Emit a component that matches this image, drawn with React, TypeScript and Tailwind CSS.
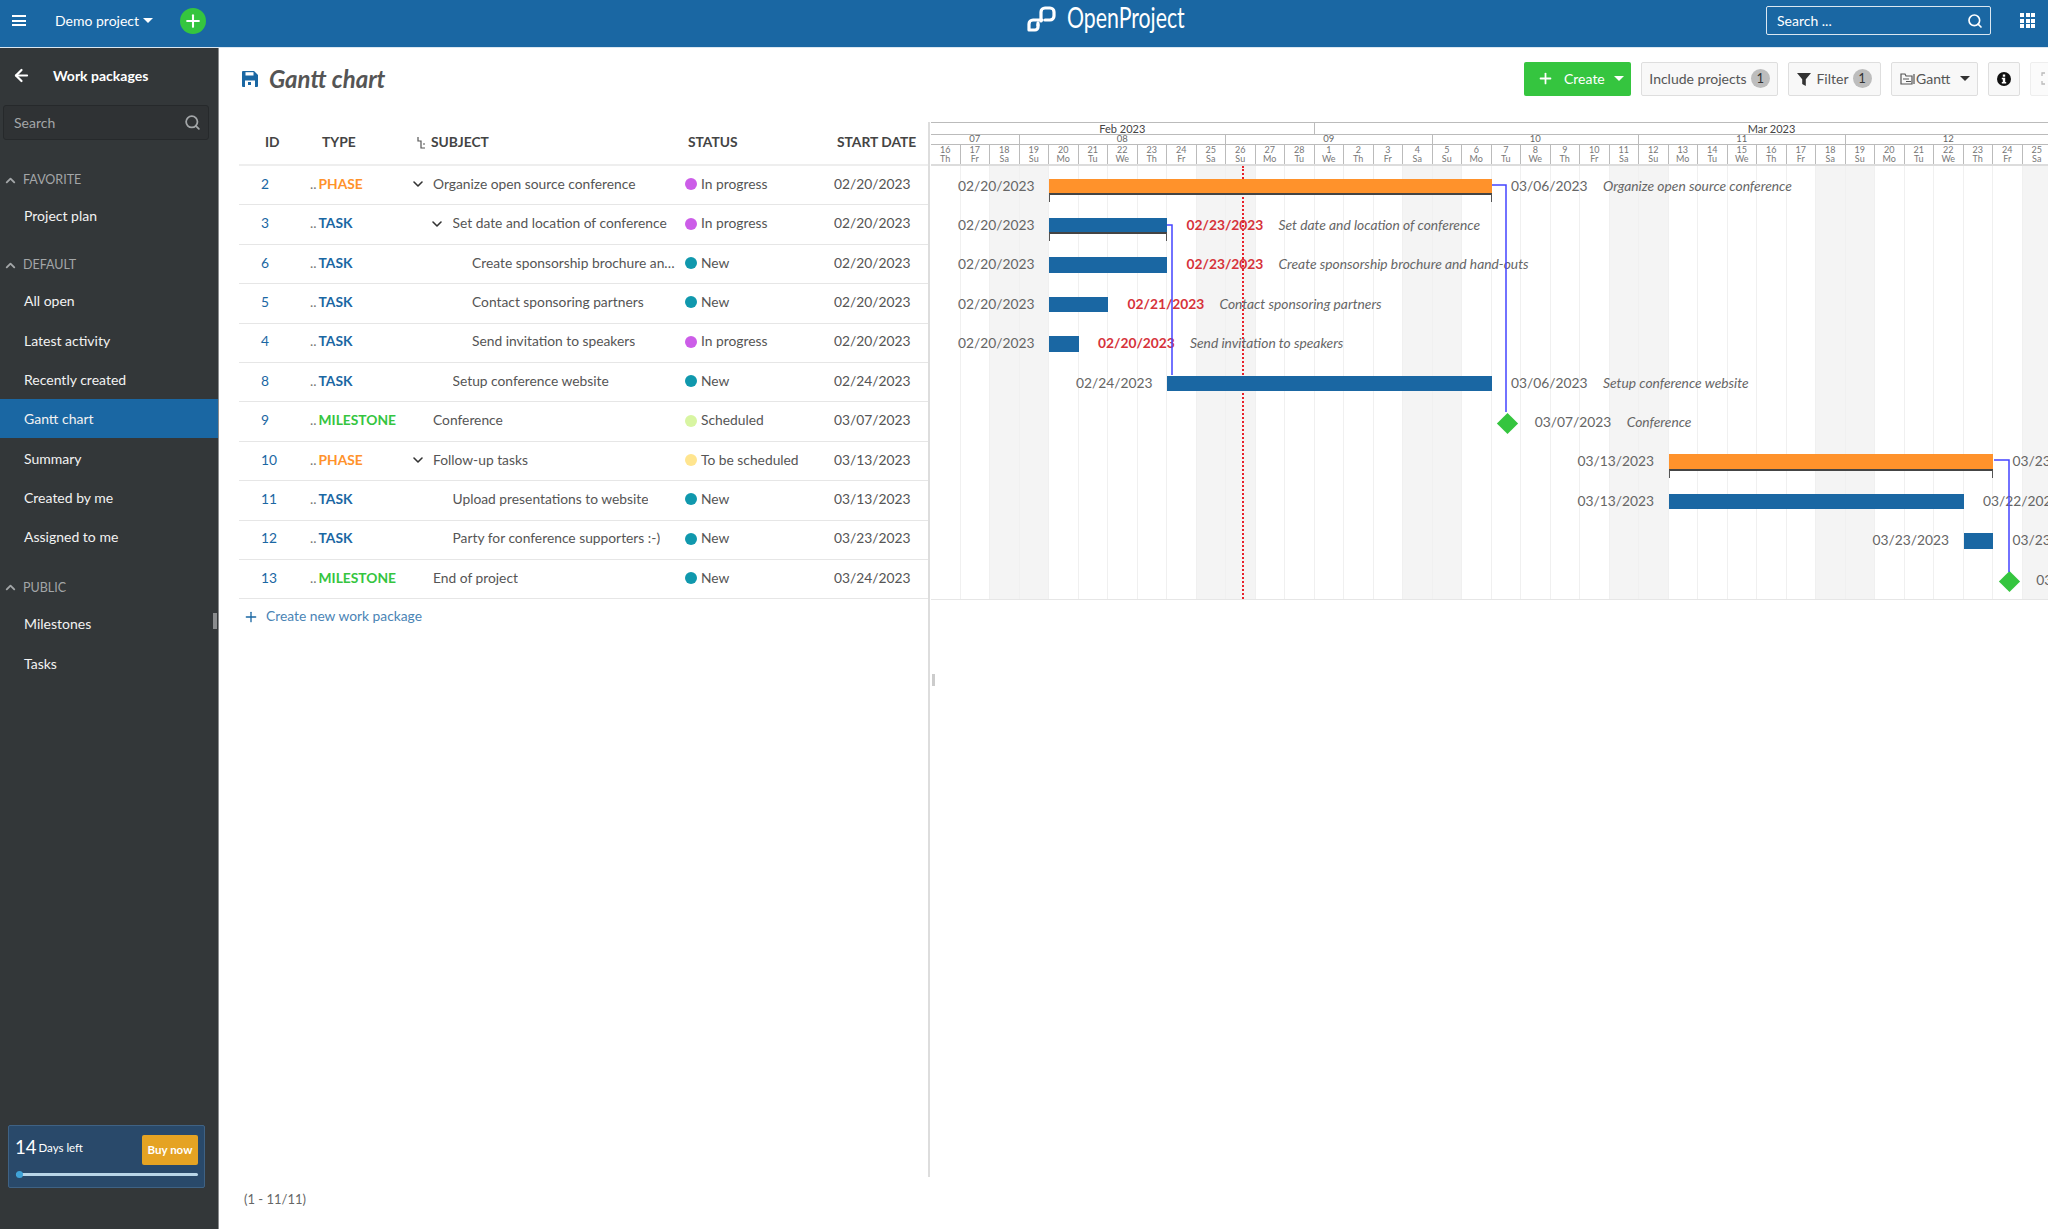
import { ArrowLeft, ChevronDown, ChevronUp, Plus, Search } from "lucide-react";

const DAY = 29.5;
const ROW = 39.4;
const DAY_NAMES = ["Th", "Fr", "Sa", "Su", "Mo", "Tu", "We"];

const days = Array.from({ length: 38 }, (_, i) => ({
  num: i < 13 ? 16 + i : i - 12,
  name: DAY_NAMES[i % 7],
  weekend: i % 7 === 2 || i % 7 === 3,
}));

const weeks = [
  { label: "07", span: 3 },
  { label: "08", span: 7 },
  { label: "09", span: 7 },
  { label: "10", span: 7 },
  { label: "11", span: 7 },
  { label: "12", span: 7 },
];

const statusDot: Record<string, string> = {
  "In progress": "bg-[#cc5de8]",
  New: "bg-[#1098ad]",
  Scheduled: "bg-[#d8f5a2]",
  "To be scheduled": "bg-[#ffe58f]",
};

const typeColor: Record<string, string> = {
  PHASE: "text-[#ff922b]",
  TASK: "text-[#1a67a3]",
  MILESTONE: "text-[#35c53f]",
};

const rows = [
  { id: 2, type: "PHASE", level: 0, toggle: true, subject: "Organize open source conference", status: "In progress", start: "02/20/2023" },
  { id: 3, type: "TASK", level: 1, toggle: true, subject: "Set date and location of conference", status: "In progress", start: "02/20/2023" },
  { id: 6, type: "TASK", level: 2, toggle: false, subject: "Create sponsorship brochure and hand-outs", status: "New", start: "02/20/2023" },
  { id: 5, type: "TASK", level: 2, toggle: false, subject: "Contact sponsoring partners", status: "New", start: "02/20/2023" },
  { id: 4, type: "TASK", level: 2, toggle: false, subject: "Send invitation to speakers", status: "In progress", start: "02/20/2023" },
  { id: 8, type: "TASK", level: 1, toggle: false, subject: "Setup conference website", status: "New", start: "02/24/2023" },
  { id: 9, type: "MILESTONE", level: 0, toggle: false, subject: "Conference", status: "Scheduled", start: "03/07/2023" },
  { id: 10, type: "PHASE", level: 0, toggle: true, subject: "Follow-up tasks", status: "To be scheduled", start: "03/13/2023" },
  { id: 11, type: "TASK", level: 1, toggle: false, subject: "Upload presentations to website", status: "New", start: "03/13/2023" },
  { id: 12, type: "TASK", level: 1, toggle: false, subject: "Party for conference supporters :-)", status: "New", start: "03/23/2023" },
  { id: 13, type: "MILESTONE", level: 0, toggle: false, subject: "End of project", status: "New", start: "03/24/2023" },
];

const bars = [
  { from: 4, to: 19, color: "bg-[#ff922b]", bracket: true, left: "02/20/2023", right: "03/06/2023", label: "Organize open source conference" },
  { from: 4, to: 8, color: "bg-[#1a67a3]", bracket: true, left: "02/20/2023", right: "02/23/2023", late: true, label: "Set date and location of conference" },
  { from: 4, to: 8, color: "bg-[#1a67a3]", left: "02/20/2023", right: "02/23/2023", late: true, label: "Create sponsorship brochure and hand-outs" },
  { from: 4, to: 6, color: "bg-[#1a67a3]", left: "02/20/2023", right: "02/21/2023", late: true, label: "Contact sponsoring partners" },
  { from: 4, to: 5, color: "bg-[#1a67a3]", left: "02/20/2023", right: "02/20/2023", late: true, label: "Send invitation to speakers" },
  { from: 8, to: 19, color: "bg-[#1a67a3]", left: "02/24/2023", right: "03/06/2023", label: "Setup conference website" },
  { from: 19, to: 20, milestone: true, right: "03/07/2023", label: "Conference" },
  { from: 25, to: 36, color: "bg-[#ff922b]", bracket: true, left: "03/13/2023", right: "03/23/2023", label: "Follow-up tasks" },
  { from: 25, to: 35, color: "bg-[#1a67a3]", left: "03/13/2023", right: "03/22/2023", label: "Upload presentations to website" },
  { from: 35, to: 36, color: "bg-[#1a67a3]", left: "03/23/2023", right: "03/23/2023", label: "Party for conference supporters :-)" },
  { from: 36, to: 37, milestone: true, right: "03/24/2023", label: "End of project" },
];

const links = ["M236 59H241V209", "M561 19H575V246", "M1063 294H1078V406"];

function MenuItem({ label, active }: { label: string; active?: boolean }) {
  return (
    <div className={`flex h-[39.3px] items-center pl-[24px] text-[14px] text-[#f2f2f2] ${active ? "bg-[#1a67a3]" : ""}`}>
      {label}
    </div>
  );
}

function GroupLabel({ label }: { label: string }) {
  return (
    <div className="flex h-[30px] items-center gap-[5px] pl-[3px] text-[12.5px] text-[#a3a6a8]">
      <ChevronUp size={15} strokeWidth={3} />
      {label}
    </div>
  );
}

function Sidebar() {
  return (
    <aside className="flex w-[219px] shrink-0 flex-col border-r border-[#8a8c8e] bg-[#333739]">
      <div className="flex h-[57px] items-center pb-[3px] pl-[12px] text-[14px] font-bold text-white">
        <ArrowLeft size={19} strokeWidth={2.8} />
        <span className="ml-[22px]">Work packages</span>
      </div>
      <div className="ml-[3px] mr-[9px] flex h-[35px] items-center justify-between rounded-[3px] border border-[#26292b] bg-[#2f3234] pl-[10px] pr-[7px] text-[14px] text-[#a3a6a8]">
        Search
        <Search size={17} strokeWidth={2.5} />
      </div>
      <div className="relative mt-[25.5px]">
        <GroupLabel label="FAVORITE" />
        <MenuItem label="Project plan" />
        <div className="mt-[15.3px]">
          <GroupLabel label="DEFAULT" />
        </div>
        <div className="mt-[1.2px]">
          <MenuItem label="All open" />
          <MenuItem label="Latest activity" />
          <MenuItem label="Recently created" />
          <MenuItem label="Gantt chart" active />
          <MenuItem label="Summary" />
          <MenuItem label="Created by me" />
          <MenuItem label="Assigned to me" />
        </div>
        <div className="mt-[16.6px]">
          <GroupLabel label="PUBLIC" />
        </div>
        <div className="mt-[1.2px]">
          <MenuItem label="Milestones" />
          <MenuItem label="Tasks" />
        </div>
        <div className="absolute right-[1px] top-[447.5px] h-[16px] w-[4px] bg-[#8a8c8e]" />
      </div>
      <div className="mb-[41px] ml-[8px] mt-auto h-[63px] w-[197px] rounded-[2px] border border-[#3f6284] bg-[#29496a] px-[6px] pt-[9px]">
        <div className="flex items-center justify-between">
          <div className="mt-[-4px] flex items-center gap-[2px] text-white">
            <span className="text-[18.5px]">14</span>
            <span className="text-[11.5px]">Days left</span>
          </div>
          <div className="flex h-[30px] w-[56px] items-center justify-center rounded-[2px] bg-[#e5a323] text-[11.5px] font-bold text-white">
            Buy now
          </div>
        </div>
        <div className="relative ml-[1px] mt-[8px] h-[3px] rounded bg-[#b9d6e8]">
          <div className="absolute left-0 top-[-2px] h-[7px] w-[7px] rounded-full bg-[#3fa3d8]" />
        </div>
      </div>
    </aside>
  );
}

function TopBar() {
  return (
    <header className="relative flex h-[48px] shrink-0 items-center justify-between border-b border-[#dbe7f1] bg-[#1a67a3] pb-[6px] text-white">
      <div className="flex items-center">
        <div className="ml-[12px] flex h-[11px] w-[14px] flex-col justify-between">
          <div className="h-[2px] bg-white" />
          <div className="h-[2px] bg-white" />
          <div className="h-[2px] bg-white" />
        </div>
        <span className="ml-[29px] text-[14px]">Demo project</span>
        <div className="ml-[4px] h-0 w-0 border-x-[5px] border-t-[5px] border-x-transparent border-t-white" />
        <div className="ml-[27px] flex h-[26px] w-[26px] items-center justify-center rounded-full bg-[#35c53f]">
          <Plus size={20} strokeWidth={2.5} />
        </div>
      </div>
      <div className="absolute left-[1026px] top-[2px] flex items-center">
        <svg width="32" height="26" viewBox="0 0 32 26" fill="none" stroke="white" strokeWidth="3.2" className="mt-[4px]">
          <path d="M3 24v-6a4 4 0 0 1 4-4h9M3 24h6a3 3 0 0 0 3-3v-4" strokeLinecap="round" />
          <path d="M12 19h0M15 15V6a4 4 0 0 1 4-4h5a4 4 0 0 1 4 4v4a4 4 0 0 1-4 4h-5" strokeLinecap="round" />
        </svg>
        <span className="ml-[9px] origin-left scale-x-[0.76] text-[28px] font-normal leading-[30px]">OpenProject</span>
      </div>
      <div className="flex items-center">
        <div className="flex h-[29px] w-[225px] items-center justify-between rounded-[2px] border border-[#dbe7f1] pl-[10px] pr-[7px] text-[14px]">
          Search ...
          <Search size={16} strokeWidth={2.5} />
        </div>
        <div className="ml-[29px] mr-[13px] grid grid-cols-3 gap-[1.5px]">
          {Array.from({ length: 9 }, (_, i) => (
            <div key={i} className="h-[4px] w-[4px] bg-white" />
          ))}
        </div>
      </div>
    </header>
  );
}

function ToolButton({ children, className }: { children: React.ReactNode; className: string }) {
  return (
    <div className={`flex h-[34px] shrink-0 items-center rounded-[2px] border border-[#dedede] bg-[#f8f8f8] text-[14px] text-[#555] ${className}`}>
      {children}
    </div>
  );
}

function Count() {
  return (
    <span className="flex h-[19px] w-[19px] items-center justify-center rounded-full bg-[#bdbdbd] text-[13px] text-[#333]">1</span>
  );
}

function Toolbar() {
  return (
    <div className="flex h-[74px] shrink-0 items-center pb-[13px] pl-[3px]">
      <svg width="16" height="16" viewBox="0 0 16 16">
        <path d="M0 1a1 1 0 0 1 1-1h11l4 4v11a1 1 0 0 1-1 1H1a1 1 0 0 1-1-1z" fill="#1a67a3" />
        <rect x="3.5" y="1.2" width="8" height="3.3" fill="white" />
        <rect x="3" y="9.5" width="10" height="6.5" fill="white" />
        <rect x="6" y="11" width="3" height="3" fill="#1a67a3" />
      </svg>
      <h1 className="ml-[11px] text-[24px] font-bold italic text-[#555]">Gantt chart</h1>
      <div className="ml-auto flex w-[524px] shrink-0 gap-[10px] overflow-hidden">
        <div className="flex h-[34px] w-[107px] shrink-0 items-center rounded-[2px] bg-[#35c53f] pl-[13px] text-[14px] text-white">
          <Plus size={17} strokeWidth={2.5} />
          <span className="ml-[10px]">Create</span>
          <div className="ml-[9px] h-0 w-0 border-x-[5px] border-t-[5px] border-x-transparent border-t-white" />
        </div>
        <ToolButton className="w-[137px] justify-center gap-[4px]">
          Include projects
          <Count />
        </ToolButton>
        <ToolButton className="w-[93px] justify-center gap-[4px]">
          <svg width="14" height="14" viewBox="0 0 14 14" fill="#333" className="mr-[1px]">
            <path d="M0 1h14L8.8 7.2V14L5.2 12V7.2z" />
          </svg>
          Filter
          <Count />
        </ToolButton>
        <ToolButton className="w-[87px] pl-[8px]">
          <svg width="15" height="12" viewBox="0 0 15 12" fill="none" stroke="#555" strokeWidth="1.2">
            <path d="M1 1h4l1 2h6v8H1zM3 6h6M6 8.5h5M14 1v10" />
          </svg>
          <span className="ml-[1px]">Gantt</span>
          <div className="ml-[10px] h-0 w-0 border-x-[5px] border-t-[5px] border-x-transparent border-t-[#333]" />
        </ToolButton>
        <ToolButton className="w-[32px] justify-center">
          <svg width="14" height="14" viewBox="0 0 14 14">
            <circle cx="7" cy="7" r="7" fill="#111" />
            <rect x="5.8" y="2.5" width="2.4" height="2.2" fill="white" />
            <path d="M4.8 5.8h3.4v4.2h1v1.4H4.8V10h1V7.2h-1z" fill="white" />
          </svg>
        </ToolButton>
        <ToolButton className="w-[40px] justify-center border-[#eee] bg-[#fbfbfb] pr-[6px]">
          <svg width="13" height="13" viewBox="0 0 13 13" fill="none" stroke="#bbb" strokeWidth="1.3">
            <path d="M1 4V1h3M9 1h3v3M12 9v3H9M4 12H1V9" />
          </svg>
        </ToolButton>
      </div>
    </div>
  );
}

function WorkPackageTable() {
  return (
    <div className="w-[689px] shrink-0 text-[13.8px] text-[#555]">
      <div className="grid h-[44px] grid-cols-[71px_99px_269px_148px_1fr] items-center border-b-2 border-[#eeeeee] pb-[2px] text-[13.8px] font-bold text-[#444]">
        <span className="pl-[26px]">ID</span>
        <span className="pl-[12px]">TYPE</span>
        <span className="flex items-center pl-[8px]">
          <svg width="9" height="12" viewBox="0 0 9 12" fill="none" stroke="#555" strokeWidth="1.2" className="mr-[5px] mt-[2px]">
            <path d="M1 0v4h3v7h4M6 7h2" />
          </svg>
          SUBJECT
        </span>
        <span className="pl-[10px]">STATUS</span>
        <span className="whitespace-nowrap pl-[11px]">START DATE</span>
      </div>
      {rows.map((row) => (
        <div key={row.id} className="grid h-[39.4px] grid-cols-[71px_99px_269px_148px_1fr] items-center border-b border-[#e6e6e6] pb-[2px]">
          <span className="pl-[22px] text-[#1a67a3]">{row.id}</span>
          <span className="whitespace-nowrap">
            <span className="text-[#777]">..</span>
            <span className={`ml-[2px] font-bold ${typeColor[row.type]}`}>{row.type}</span>
          </span>
          <span
            className="flex min-w-0 items-center pr-[1px]"
            style={{ paddingLeft: 24 + row.level * 19.5 - (row.toggle ? 23.5 : 0) }}
          >
            {row.toggle && <ChevronDown size={16} strokeWidth={2.4} className="mr-[7.5px] shrink-0 text-[#333]" />}
            <span className="truncate">{row.subject}</span>
          </span>
          <span className="flex items-center gap-[4px] pl-[7px]">
            <span className={`h-[12px] w-[12px] rounded-full ${statusDot[row.status]}`} />
            {row.status}
          </span>
          <span className="pl-[8px]">{row.start}</span>
        </div>
      ))}
      <div className="flex h-[35px] items-center gap-[7px] pl-[4px] text-[#4a84b5]">
        <Plus size={16} strokeWidth={2} className="text-[#1a67a3]" />
        Create new work package
      </div>
    </div>
  );
}

function TimelineHeader() {
  return (
    <div className="h-[44px] w-[1121px] border-b-2 border-[#dcdcdc] text-center text-[#666]">
      <div className="grid h-[12px] grid-cols-[383.5px_914px] border-t border-[#bbb] text-[11px] leading-[11px] text-[#444]">
        <div className="border-r border-[#bbb]">Feb 2023</div>
        <div>Mar 2023</div>
      </div>
      <div className="grid h-[10px] grid-cols-[repeat(38,29.5px)] border-t border-[#bbb] text-[9.5px] leading-[8px]">
        {weeks.map((week) => (
          <div key={week.label} className="border-r border-[#bbb]" style={{ gridColumn: `span ${week.span}` }}>
            {week.label}
          </div>
        ))}
      </div>
      <div className="grid h-[20px] grid-cols-[repeat(38,29.5px)] border-t border-[#bbb] text-[9px] leading-[9px] text-[#777]">
        {days.map((day, i) => (
          <div key={i} className="border-r border-[#bbb]">
            <div>{day.num}</div>
            <div>{day.name}</div>
          </div>
        ))}
      </div>
    </div>
  );
}

function TimelineChart() {
  return (
    <div className="relative h-[434px] w-[1121px] border-b border-[#e6e6e6] text-[13.8px] text-[#666]">
      <div className="grid h-full grid-cols-[repeat(38,29.5px)]">
        {days.map((day, i) => (
          <div key={i} className={`border-r border-[#f0f0f0] ${day.weekend ? "bg-[#f4f4f4]" : ""}`} />
        ))}
      </div>
      <div className="absolute bottom-0 left-[311px] top-0 border-l-2 border-dotted border-[#e8212a]" />
      {bars.map((bar, i) => {
        const left = bar.from * DAY;
        const width = (bar.to - bar.from) * DAY;
        const top = 12.5 + i * ROW;
        if (bar.milestone) {
          const c = left + DAY / 2 + 1.5;
          return (
            <div key={i}>
              <div className="absolute h-[15px] w-[15px] rotate-45 bg-[#35c53f]" style={{ left: c - 7.5, top: top + 1 }} />
              <div className="absolute flex gap-[15px] whitespace-nowrap" style={{ left: c + 27, top: top - 3 }}>
                <span className="w-[77px]">{bar.right}</span>
                <span className="italic">{bar.label}</span>
              </div>
            </div>
          );
        }
        return (
          <div key={i}>
            {bar.left && (
              <span className="absolute -translate-x-full whitespace-nowrap" style={{ left: left - 14.5, top: top - 3 }}>
                {bar.left}
              </span>
            )}
            <div className={`absolute h-[15.5px] ${bar.color}`} style={{ left, width, top }} />
            {bar.bracket && (
              <div
                className="absolute h-[9px] border-x border-t-2 border-[#555] border-t-[#444]"
                style={{ left, width, top: top + 14.5 }}
              />
            )}
            <div
              className="absolute flex gap-[15px] whitespace-nowrap"
              style={{ left: left + width + 19.5, top: top - 3 }}
            >
              <span className={`w-[77px] ${bar.late ? "font-bold text-[#d6333b]" : ""}`}>{bar.right}</span>
              <span className="italic">{bar.label}</span>
            </div>
          </div>
        );
      })}
      <svg className="absolute inset-0" width="1121" height="434" fill="none" stroke="#4444ff" strokeWidth="1.5">
        {links.map((d) => (
          <path key={d} d={d} />
        ))}
      </svg>
    </div>
  );
}

export default function App() {
  return (
    <div className="flex h-[1229px] w-[2048px] flex-col overflow-hidden bg-white [font-family:Lato,sans-serif]">
      <TopBar />
      <div className="flex min-h-0 flex-1">
        <Sidebar />
        <main className="flex min-w-0 flex-1 flex-col pl-[20px]">
          <Toolbar />
          <div className="flex h-[1055px] shrink-0">
            <WorkPackageTable />
            <div className="relative overflow-hidden border-l-2 border-[#dddddd] pl-[1px]">
              <TimelineHeader />
              <TimelineChart />
              <div className="absolute left-[2px] top-[552px] h-[12px] w-[3px] bg-[#ccc]" />
            </div>
          </div>
          <div className="mt-[13px] pl-[5px] text-[13px] text-[#666]">(1 - 11/11)</div>
        </main>
      </div>
    </div>
  );
}
